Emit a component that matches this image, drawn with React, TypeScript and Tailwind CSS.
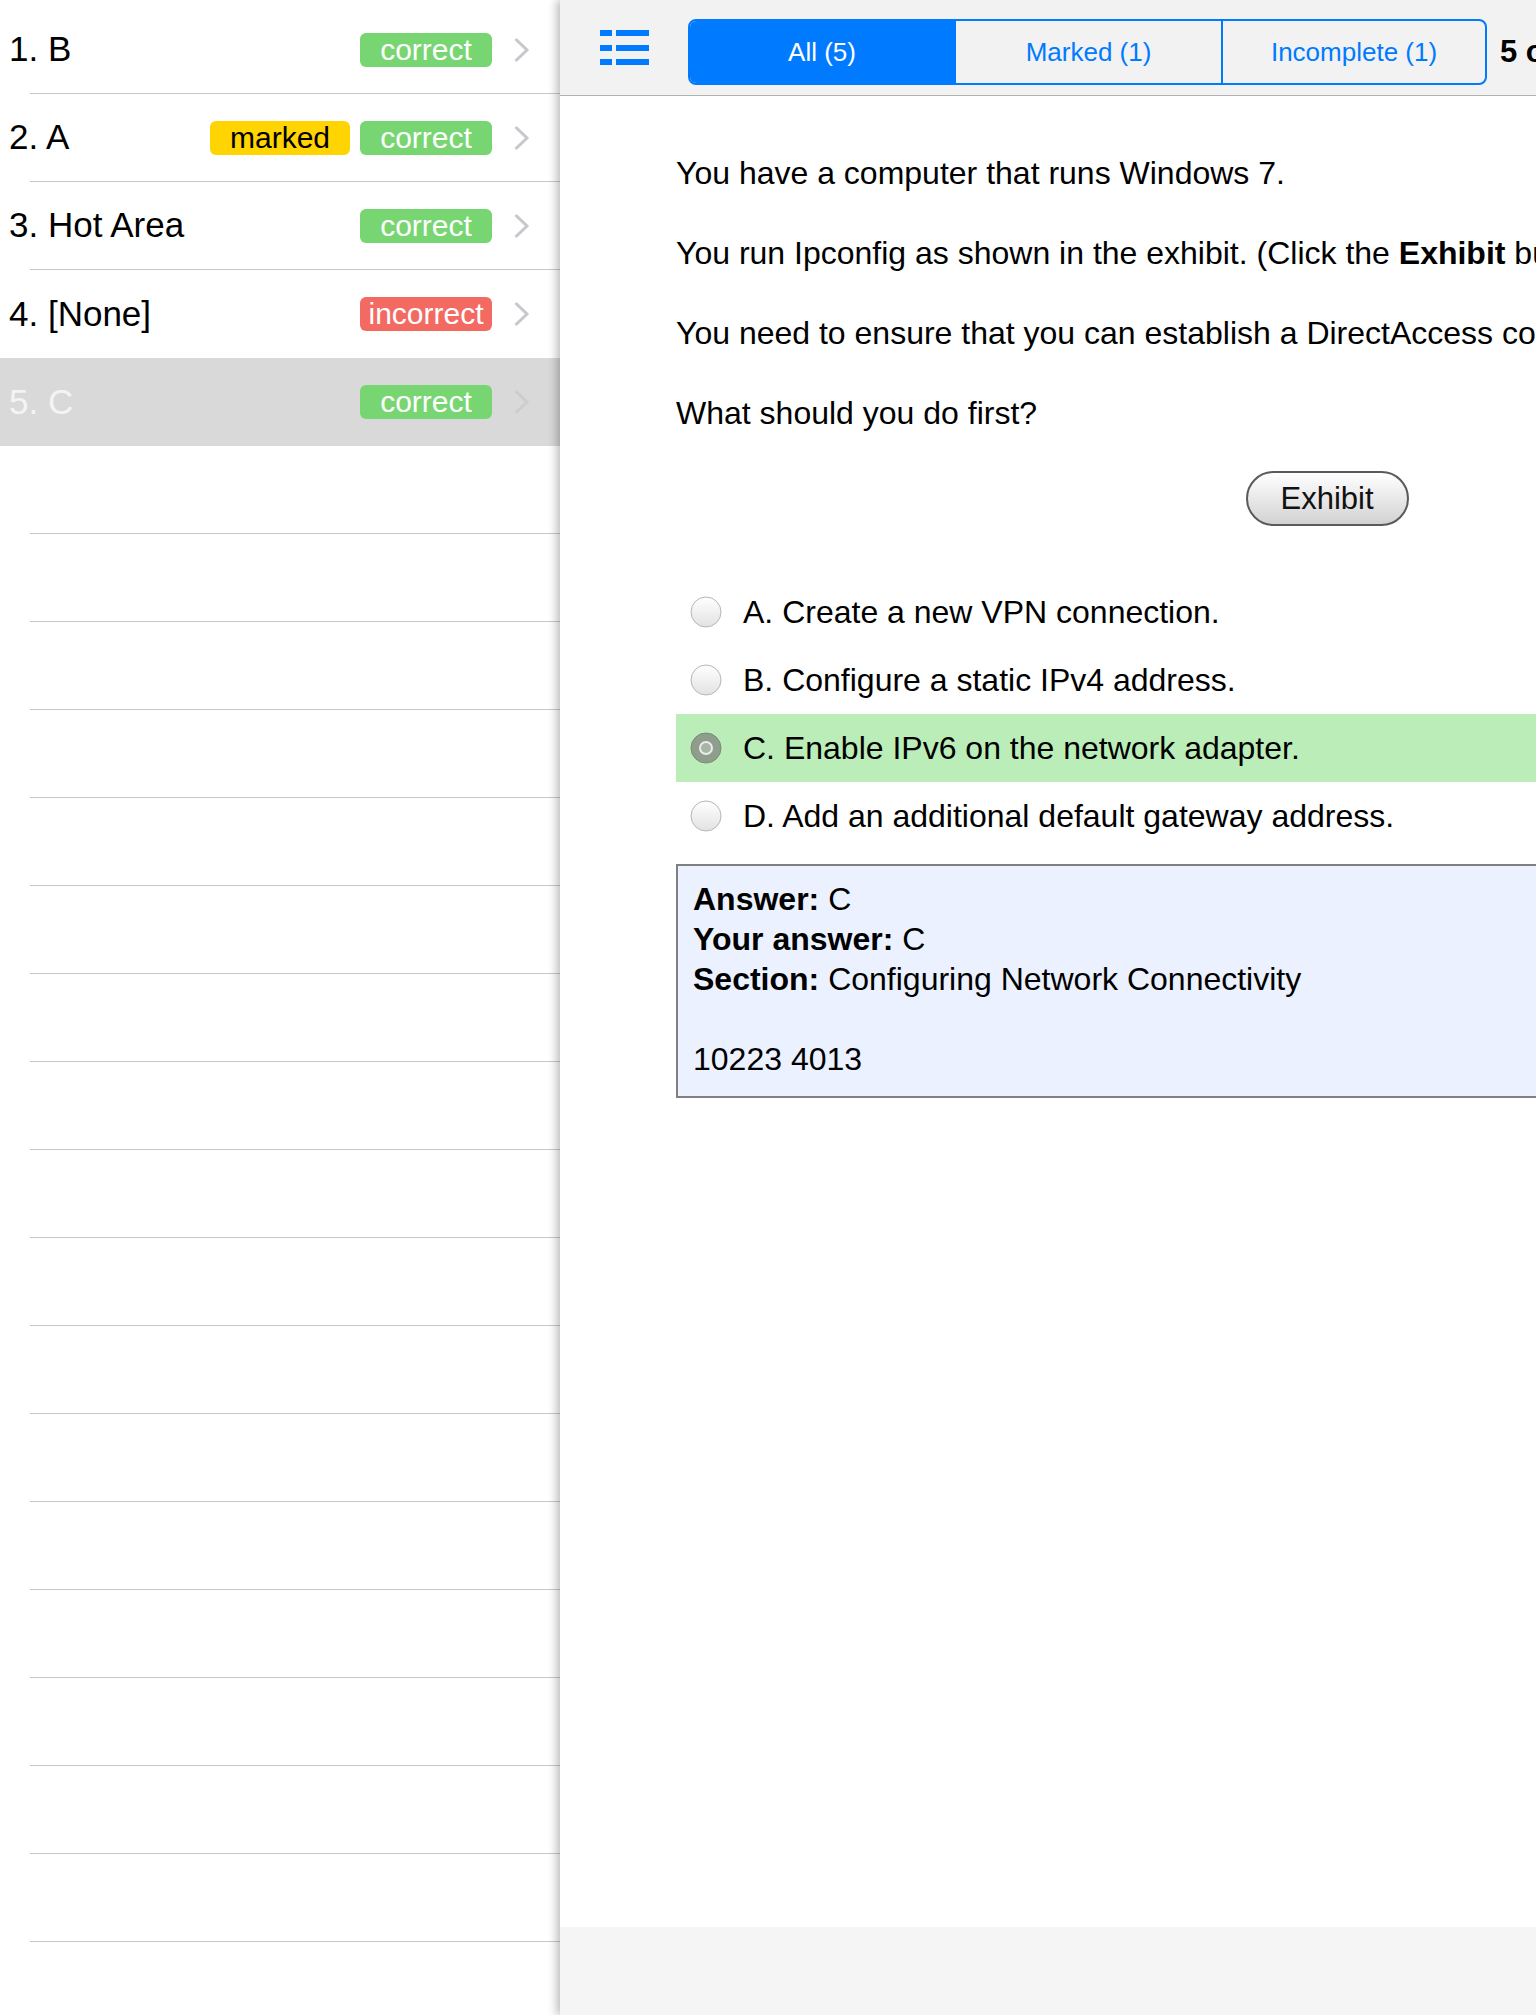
import React from "react";

type Row = {
  label: string;
  marked?: boolean;
  status: "correct" | "incorrect";
  selected?: boolean;
  noLine?: boolean;
};

const rows: Row[] = [
  { label: "1. B", status: "correct" },
  { label: "2. A", marked: true, status: "correct" },
  { label: "3. Hot Area", status: "correct" },
  { label: "4. [None]", status: "incorrect", noLine: true },
  { label: "5. C", status: "correct", selected: true, noLine: true },
];

const options = [
  { key: "A", text: "A. Create a new VPN connection." },
  { key: "B", text: "B. Configure a static IPv4 address." },
  { key: "C", text: "C. Enable IPv6 on the network adapter.", chosen: true },
  { key: "D", text: "D. Add an additional default gateway address." },
];

function Chevron({ light }: { light?: boolean }) {
  return (
    <svg width="17" height="26" viewBox="0 0 17 26" className="ml-[21px] shrink-0">
      <path d="M2.5 2 L14 13 L2.5 24" fill="none" stroke={light ? "#cdcdcd" : "#c7c7cc"} strokeWidth="3" />
    </svg>
  );
}

function Radio({ checked }: { checked?: boolean }) {
  return (
    <svg width="32" height="32" viewBox="0 0 32 32" className="shrink-0">
      <defs>
        <linearGradient id="rg" x1="0" y1="0" x2="0" y2="1">
          <stop offset="0" stopColor="#ffffff" />
          <stop offset="1" stopColor="#e2e2e2" />
        </linearGradient>
      </defs>
      {checked ? (
        <>
          <circle cx="16" cy="16" r="15" fill="#8f9d8d" stroke="#7b8879" strokeWidth="1" />
          <circle cx="16" cy="16" r="6" fill="#a9b3a7" stroke="#e9ede8" strokeWidth="2" />
        </>
      ) : (
        <circle cx="16" cy="16" r="15" fill="url(#rg)" stroke="#b6b6b6" strokeWidth="1" />
      )}
    </svg>
  );
}

function SidebarRow({ row }: { row: Row }) {
  return (
    <div className={`h-[88px] ${row.selected ? "bg-[#d9d9d9] text-[#f4f4f4]" : "text-black"}`}>
      <div
        className={`ml-[30px] h-full flex items-center pr-[30px] ${
          row.noLine ? "" : "border-b border-[#c8c7cc]"
        }`}
      >
        <span className="-ml-[21px] flex-1 text-[35px] whitespace-nowrap">{row.label}</span>
        {row.marked && (
          <span className="w-[140px] h-[34px] mr-[10px] rounded-[6px] bg-[#ffd400] text-black text-[30px] leading-[34px] text-center">
            marked
          </span>
        )}
        <span
          className={`w-[132px] h-[34px] rounded-[6px] text-white text-[30px] leading-[34px] text-center ${
            row.status === "correct" ? "bg-[#77d672]" : "bg-[#f36a62]"
          }`}
        >
          {row.status}
        </span>
        <Chevron light={row.selected} />
      </div>
    </div>
  );
}

export default function App() {
  const empty = Array.from({ length: 19 });
  return (
    <div className="h-[2015px] w-full flex overflow-hidden bg-white font-['Liberation_Sans',Arial,sans-serif]">
      {/* question list */}
      <div className="w-[560px] shrink-0 pt-[6px] bg-white overflow-hidden">
        {rows.map((r) => (
          <SidebarRow key={r.label} row={r} />
        ))}
        {empty.map((_, i) => (
          <div key={i} className="h-[88px]">
            <div className="ml-[30px] h-full border-b border-[#c8c7cc]" />
          </div>
        ))}
      </div>

      {/* question detail */}
      <div className="flex-1 min-w-0 flex flex-col overflow-hidden shadow-[-3px_0_9px_rgba(0,0,0,0.28)]">
        <div className="h-[96px] shrink-0 bg-[#f2f2f2] border-b border-[#b2b2b2] flex items-start pl-[40px]">
          <svg width="49" height="35" viewBox="0 0 49 35" className="mt-[30px] shrink-0">
            <rect x="0" y="0" width="12" height="6" fill="#007aff" />
            <rect x="16" y="0" width="33" height="6" fill="#007aff" />
            <rect x="0" y="15" width="12" height="6" fill="#007aff" />
            <rect x="16" y="15" width="33" height="6" fill="#007aff" />
            <rect x="0" y="29" width="12" height="6" fill="#007aff" />
            <rect x="16" y="29" width="33" height="6" fill="#007aff" />
          </svg>
          <div className="ml-[39px] mt-[19px] flex h-[66px] w-[799px] shrink-0 overflow-hidden rounded-[8px] border-2 border-[#007aff] text-[26px]">
            <div className="w-[264px] flex items-center justify-center bg-[#007aff] text-white">All (5)</div>
            <div className="w-[267px] flex items-center justify-center border-l-2 border-[#007aff] text-[#007aff]">
              Marked (1)
            </div>
            <div className="flex-1 flex items-center justify-center border-l-2 border-[#007aff] text-[#007aff]">
              Incomplete (1)
            </div>
          </div>
          <span className="ml-[13px] mt-[34px] text-[31px] leading-[36px] font-bold text-black whitespace-nowrap">
            5 of 5
          </span>
        </div>

        <div className="h-[1831px] shrink-0 bg-white pl-[116px]">
          <div className="w-[1302px] pt-[57px] text-[32px] leading-[40px] text-black">
            <p className="whitespace-nowrap">You have a computer that runs Windows 7.</p>
            <p className="mt-[40px] whitespace-nowrap">
              You run Ipconfig as shown in the exhibit. (Click the <b>Exhibit</b> button.)
            </p>
            <p className="mt-[40px] whitespace-nowrap">
              You need to ensure that you can establish a DirectAccess connection to your company network.
            </p>
            <p className="mt-[40px] whitespace-nowrap">What should you do first?</p>

            <div className="mt-[38px] flex justify-center">
              <button className="w-[163px] h-[55px] rounded-full border-2 border-[#5a5a5a] bg-[linear-gradient(#ffffff,#d2d2d2)] text-[31px] text-[#111]">
                Exhibit
              </button>
            </div>

            <div className="mt-[52px]">
              {options.map((o) => (
                <div
                  key={o.key}
                  className={`h-[68px] flex items-center pl-[14px] gap-[21px] whitespace-nowrap ${
                    o.chosen ? "bg-[#bbedb8]" : ""
                  }`}
                >
                  <Radio checked={o.chosen} />
                  <span>{o.text}</span>
                </div>
              ))}
            </div>

            <div className="mt-[14px] border-2 border-[#808080] bg-[#ebf1fe] pt-[13px] pb-[17px] pl-[15px]">
              <div>
                <b>Answer:</b> C
              </div>
              <div>
                <b>Your answer:</b> C
              </div>
              <div>
                <b>Section:</b> Configuring Network Connectivity
              </div>
              <div className="h-[40px]" />
              <div>10223 4013</div>
            </div>
          </div>
        </div>
        <div className="flex-1 bg-[#f5f5f5]" />
      </div>
    </div>
  );
}
